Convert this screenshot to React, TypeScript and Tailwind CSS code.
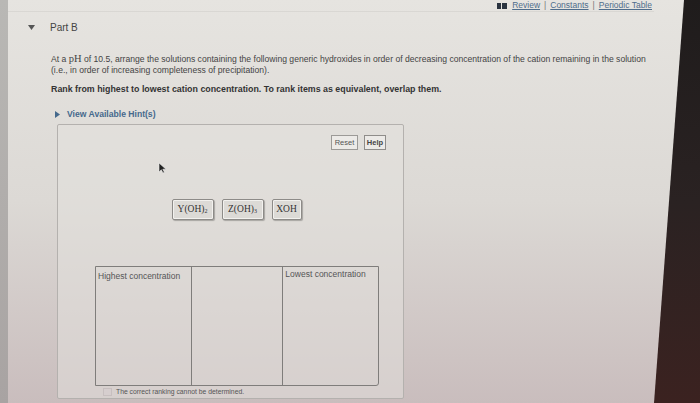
import React from 'react';

const Tile = ({ children, w }: { children: React.ReactNode; w: string }) => (
  <div
    className={`${w} h-[21px] flex items-center justify-center rounded-[2px] border border-[#8d8b88] bg-[#dcdad6] shadow-[inset_0_0_0_1px_#f2f1ee,1px_1px_1px_rgba(0,0,0,0.25)] text-[9.5px] text-[#333] font-['Liberation_Serif',serif]`}
  >
    {children}
  </div>
);

const Cursor = () => (
  <svg width="9" height="12" viewBox="0 0 9 12" className="absolute left-[100px] top-[37px]">
    <path d="M1 1 L1 10 L3.3 7.8 L5 11 L6.4 10.3 L4.8 7.2 L8 7.2 Z" fill="#222" stroke="#eee" strokeWidth="0.6" />
  </svg>
);

const App: React.FC = () => {
  return (
    <div className="relative w-[700px] h-[403px] overflow-hidden flex bg-gradient-to-b from-[#e6e4e0] via-[#dcd9d5] to-[#c9bdbd] font-['Liberation_Sans',Arial,sans-serif] text-[#3d3d3d]">
      {/* left page edge */}
      <div className="w-[8px] shrink-0 bg-gradient-to-b from-[#b9b8b5] to-[#a8a3a2]" />

      <div className="flex-1 min-w-0">
        {/* top links */}
        <div className="h-[12px] flex items-center justify-end pr-[2px] text-[8.5px] text-[#4f6d8c] border-b border-[#d9d7d3]">
          <svg width="10" height="6" viewBox="0 0 10 6" className="mr-[5px]">
            <rect x="0" y="0" width="4" height="6" fill="#2b3440" />
            <rect x="5" y="0" width="5" height="6" fill="#2b3440" />
          </svg>
          <span className="underline">Review</span>
          <span className="mx-[4px] text-[#777]">|</span>
          <span className="underline">Constants</span>
          <span className="mx-[4px] text-[#777]">|</span>
          <span className="underline">Periodic Table</span>
        </div>

        {/* Part B */}
        <div className="h-[30px] flex items-center pl-[20px]">
          <svg width="7" height="5" viewBox="0 0 7 5" className="mr-[15px]">
            <path d="M0 0 H7 L3.5 5 Z" fill="#555" />
          </svg>
          <span className="text-[10px] text-[#444]">Part B</span>
        </div>

        {/* question */}
        <div className="pl-[43px] pt-[12px] text-[8.6px] leading-[11px] text-[#444]">
          <p className="whitespace-nowrap">
            At a <span className="font-['Liberation_Serif',serif] text-[10.5px] leading-none">pH</span> of 10.5, arrange the solutions containing the following generic hydroxides in order of decreasing concentration of the cation remaining in the solution
          </p>
          <p className="whitespace-nowrap">(i.e., in order of increasing completeness of precipitation).</p>
          <p className="mt-[8px] text-[8.85px] font-bold text-[#333] whitespace-nowrap">
            Rank from highest to lowest cation concentration. To rank items as equivalent, overlap them.
          </p>
          <div className="mt-[14px] flex items-center font-bold text-[#45698c]">
            <svg width="5" height="7" viewBox="0 0 5 7" className="ml-[4px] mr-[7px]">
              <path d="M0 0 L5 3.5 L0 7 Z" fill="#45698c" />
            </svg>
            View Available Hint(s)
          </div>
        </div>

        {/* ranking widget */}
        <div className="relative ml-[49px] mt-[4px] w-[347px] h-[275px] rounded-[2px] border border-[#b4b1ae] bg-[#e4e2de]/50 flex flex-col">
          <div className="flex justify-end gap-[6px] pt-[10px] pr-[17px]">
            <div className="h-[15px] w-[27px] flex items-center justify-center border border-[#9c9a97] bg-[#eceae7] text-[7.5px] text-[#555]">
              Reset
            </div>
            <div className="h-[15px] w-[22px] flex items-center justify-center border border-[#8f8d8a] bg-[#eceae7] text-[7.5px] font-bold text-[#444]">
              Help
            </div>
          </div>
          <Cursor />

          <div className="mt-[49px] flex justify-center gap-[8px] pl-[12px]">
            <Tile w="w-[42px]">
              Y(OH)<sub className="text-[6px]">2</sub>
            </Tile>
            <Tile w="w-[42px]">
              Z(OH)<sub className="text-[6px]">3</sub>
            </Tile>
            <Tile w="w-[30px]">XOH</Tile>
          </div>

          <div className="mt-[46px] ml-[37px] w-[284px] h-[120px] flex border border-[#7f7d7b] rounded-br-[3px]">
            <div className="flex-1 border-r border-[#7f7d7b] px-[2px] pt-[3px] text-[8.5px] text-[#555]">
              Highest concentration
            </div>
            <div className="flex-1 border-r border-[#7f7d7b]" />
            <div className="flex-1 px-[2px] pt-[1px] text-[8.5px] text-[#555]">Lowest concentration</div>
          </div>

          <div className="mt-[1px] ml-[45px] flex items-center text-[6.8px] text-[#555]">
            <div className="w-[9px] h-[8px] mr-[4px] border border-[#c7bfbf] bg-[#d6cece]" />
            The correct ranking cannot be determined.
          </div>
        </div>
      </div>

      {/* monitor bezel */}
      <div className="w-[46px] shrink-0 bg-gradient-to-b from-[#1f1c1c] via-[#2a2222] to-[#3b2220] [clip-path:polygon(30px_0,100%_0,100%_100%,0_100%)]" />
    </div>
  );
};

export default App;
